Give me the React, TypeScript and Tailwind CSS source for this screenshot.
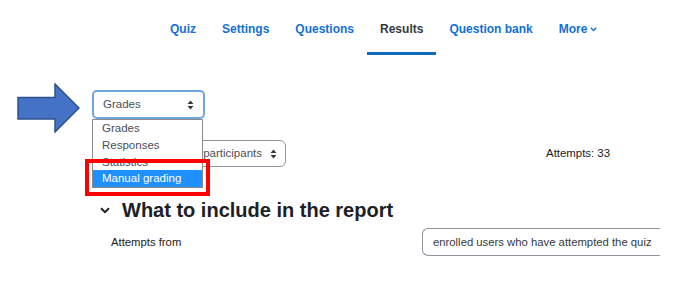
const navItems = ["Quiz", "Settings", "Questions", "Results", "Question bank"];

function UpDown() {
  return (
    <svg width="7" height="10" viewBox="0 0 7 10" className="shrink-0">
      <path d="M3.5 0.5 L6.5 4 H0.5 Z" fill="#343a40" />
      <path d="M3.5 9.5 L6.5 6 H0.5 Z" fill="#343a40" />
    </svg>
  );
}

export default function App() {
  return (
    <div className="relative w-[688px] h-[300px] overflow-hidden bg-white font-['Liberation_Sans',Arial,sans-serif] text-[#1d2125]">
      {/* secondary navigation */}
      <nav className="flex pl-[157px] h-[55px]">
        {navItems.map((item) => (
          <div
            key={item}
            className={`flex items-center px-[13px] pt-[6px] border-b-[3px] text-[12px] font-bold ${
              item === "Results" ? "border-[#0f6cbf] text-[#343a40]" : "border-transparent text-[#1170d6]"
            }`}
          >
            {item}
          </div>
        ))}
        <div className="flex items-center gap-[3px] px-[13px] pt-[6px] border-b-[3px] border-transparent text-[12px] font-bold text-[#1170d6]">
          More
          <svg width="7" height="5" viewBox="0 0 7 5">
            <path d="M0.8 0.8 L3.5 3.6 L6.2 0.8" fill="none" stroke="#1170d6" strokeWidth="1.4" />
          </svg>
        </div>
      </nav>

      {/* report select */}
      <div className="pl-[92px] mt-[35px]">
        <div className="flex items-center justify-between w-[113px] h-[29px] pl-[9px] pr-[9px] border-2 border-[#6ea6e0] rounded-[5px] text-[11.5px] text-[#495057]">
          Grades
          <UpDown />
        </div>
      </div>

      {/* group select + attempts */}
      <div className="flex items-center mt-[21px] pr-[78px]">
        <div className="flex items-center justify-end gap-[8px] ml-[150px] w-[136px] h-[27px] pr-[8px] border border-[#8f959e] rounded-[6px] text-[11.5px] text-[#495057] whitespace-nowrap">
          All participants
          <UpDown />
        </div>
        <div className="ml-auto text-[11.4px]">Attempts: 33</div>
      </div>

      {/* section heading */}
      <div className="flex items-center gap-[12px] pl-[100px] mt-[31px] h-[24px]">
        <svg width="10" height="7" viewBox="0 0 10 7">
          <path d="M1 1.2 L5 5.2 L9 1.2" fill="none" stroke="#1d2125" strokeWidth="2" />
        </svg>
        <h3 className="text-[20px] font-bold leading-[24px]">What to include in the report</h3>
      </div>

      <div className="flex items-center mt-[6px]">
        <div className="pl-[111px] w-[422px] text-[11.3px]">Attempts from</div>
        <div className="flex items-center w-[238px] h-[28px] pl-[10px] border border-r-0 border-[#8f959e] rounded-l-[6px] text-[11.3px] text-[#343a40] whitespace-nowrap overflow-hidden">
          enrolled users who have attempted the quiz
        </div>
      </div>

      {/* open dropdown list */}
      <div className="absolute left-[92px] top-[119px] w-[111px] border border-[#8a8a8a] bg-white text-[11.5px] text-[#495057]">
        <div className="h-[16.75px] leading-[16.75px] pl-[9px]">Grades</div>
        <div className="h-[16.75px] leading-[16.75px] pl-[9px]">Responses</div>
        <div className="h-[16.75px] leading-[16.75px] pl-[9px]">Statistics</div>
        <div className="h-[16.75px] leading-[16.75px] pl-[9px] bg-[#1e90ff] text-white">Manual grading</div>
      </div>

      {/* annotation overlays */}
      <div className="absolute left-[85px] top-[159px] w-[125px] h-[37px] border-4 border-[#ff0000]" />
      <svg className="absolute left-[17px] top-[83px]" width="63" height="50" viewBox="0 0 63 50">
        <path d="M1 14.5 H38 V1 L62 25 L38 49 V36 H1 Z" fill="#4472c4" stroke="#2f528f" strokeWidth="1.5" />
      </svg>
    </div>
  );
}
